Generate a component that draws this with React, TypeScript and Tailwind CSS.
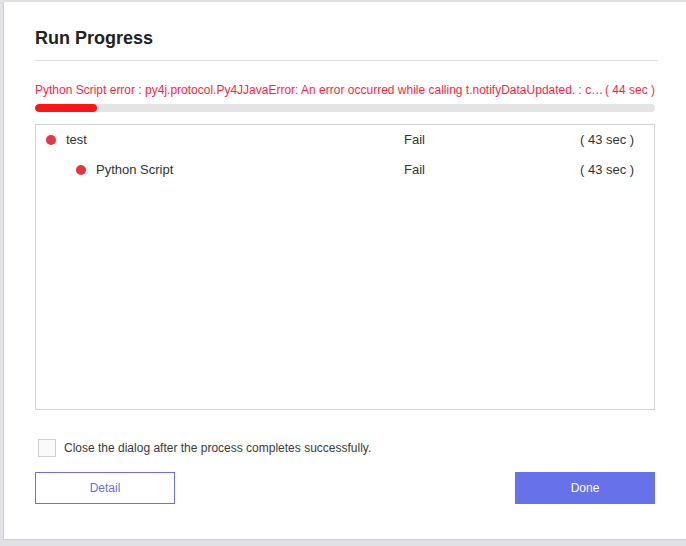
import React from 'react';

type Step = { name: string; status: string; time: string; depth: number };

const steps: Step[] = [
  { name: 'test', status: 'Fail', time: '( 43 sec )', depth: 0 },
  { name: 'Python Script', status: 'Fail', time: '( 43 sec )', depth: 1 },
];

export default function App() {
  return (
    <div
      className="w-[686px] h-[546px] overflow-hidden bg-[#dfe1e4] pt-[2px] pl-[3px]"
      style={{ fontFamily: '"Liberation Sans", Arial, sans-serif' }}
    >
      <div className="w-[700px] h-[538px] bg-white border-l border-b border-[#d0d0d0] pl-[31px]">
        {/* Title */}
        <div className="w-[623px] pt-[24px] pb-[10px] border-b border-[#dcdcdc]">
          <h1 className="h-6 leading-6 text-[18px] font-bold text-[#222]">Run Progress</h1>
        </div>

        <div className="w-[620px]">
          {/* Error + progress */}
          <div className="mt-[21px] flex h-4 leading-4 text-[12px] text-[#ff1f3d] whitespace-nowrap">
            <span className="flex-1 truncate">
              Python Script error : py4j.protocol.Py4JJavaError: An error occurred while calling t.notifyDataUpdated. : c…
            </span>
            <span>( 44 sec )</span>
          </div>
          <div className="mt-[6px] h-2 rounded-full bg-[#e4e4e4] overflow-hidden">
            <div className="h-full bg-[#ff1414] rounded-full" style={{ width: '10%' }} />
          </div>

          {/* Steps */}
          <div className="mt-[12px] h-[286px] border border-[#d4d4d4]">
            {steps.map((s) => (
              <div key={s.name} className="flex h-[30px] items-center text-[13px] text-[#333]">
                <div className={`flex flex-1 items-center gap-[10px] ${s.depth ? 'pl-[40px]' : 'pl-[10px]'}`}>
                  <span className="w-[10px] h-[10px] rounded-full bg-[#e8343d]" />
                  <span>{s.name}</span>
                </div>
                <span className="w-[176px]">{s.status}</span>
                <span className="w-[74px]">{s.time}</span>
              </div>
            ))}
          </div>

          {/* Checkbox */}
          <label className="mt-[29px] flex items-center gap-[8px] pl-[3px] h-[18px] text-[12px] text-[#3a3a3a]">
            <span className="w-[18px] h-[18px] border border-[#cfcfcf] bg-[#fafafa]" />
            <span>Close the dialog after the process completes successfully.</span>
          </label>

          {/* Buttons */}
          <div className="mt-[15px] flex justify-between">
            <button className="w-[140px] h-8 border border-[#6c6fe6] text-[12px] text-[#6b6ee0] bg-white">
              Detail
            </button>
            <button className="w-[140px] h-8 bg-[#6671ea] text-[12px] text-white">Done</button>
          </div>
        </div>
      </div>
    </div>
  );
}
